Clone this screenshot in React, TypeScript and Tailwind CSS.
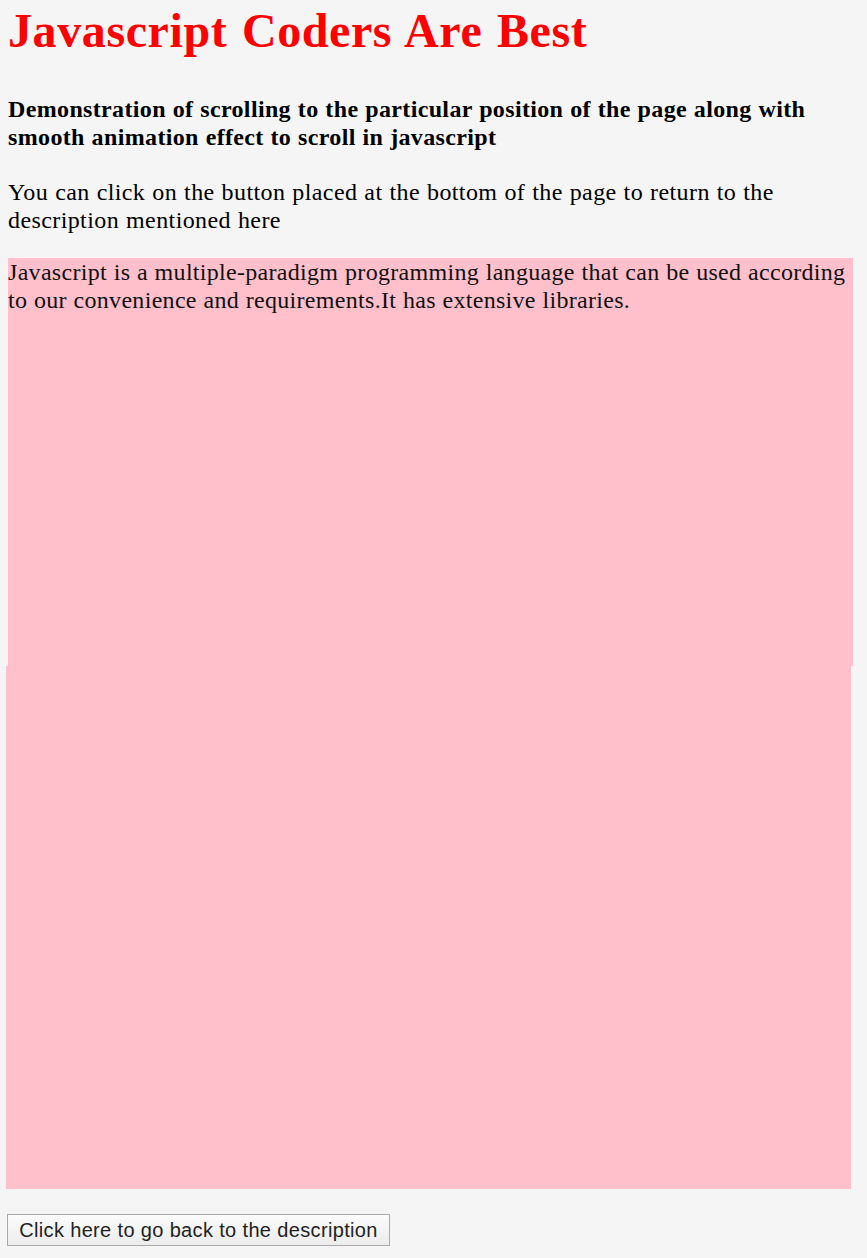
import React from 'react';

export default function App() {
  const scrollBack = () => {
    document.getElementById('description')?.scrollIntoView({ behavior: 'smooth' });
  };

  return (
    <div className="min-h-[1258px] w-[867px] bg-[#f5f5f5] pt-[3px] font-['Liberation_Serif',serif] text-black">
      <h1 className="ml-2 w-[845px] text-[48px] font-bold leading-[55px] tracking-[0.6px] text-[#ff0000] [word-spacing:2px]">
        Javascript Coders Are Best
      </h1>
      <h4 className="ml-2 mt-[37px] w-[845px] text-[24px] font-bold leading-[28px] tracking-[0.35px] [word-spacing:0.5px]">
        Demonstration of scrolling to the particular position of the page along with smooth animation effect to
        scroll in javascript
      </h4>
      <p className="ml-2 mt-[27px] w-[845px] text-[24px] leading-[28px] tracking-[0.4px] [word-spacing:0.6px]">
        You can click on the button placed at the bottom of the page to return to the description mentioned here
      </p>
      <div
        id="description"
        className="ml-2 mt-[24px] h-[408px] w-[845px] bg-[#ffc0cb] text-[24px] leading-[28px] tracking-[0.3px] text-[#111] [word-spacing:0.4px]"
      >
        Javascript is a multiple-paradigm programming language that can be used according to our convenience and
        requirements.It has extensive libraries.
      </div>
      <div className="ml-[6px] h-[523px] w-[845px] bg-[#ffc0cb]" />
      <button
        onClick={scrollBack}
        className="ml-[7px] mt-[25px] flex h-[32px] w-[383px] items-center justify-center border border-[#a9a9a9] bg-gradient-to-b from-[#fbfbfb] to-[#ececec] font-['Liberation_Sans',Arial,sans-serif] text-[20px] leading-none tracking-[0.35px] text-[#222]"
      >
        Click here to go back to the description
      </button>
    </div>
  );
}
